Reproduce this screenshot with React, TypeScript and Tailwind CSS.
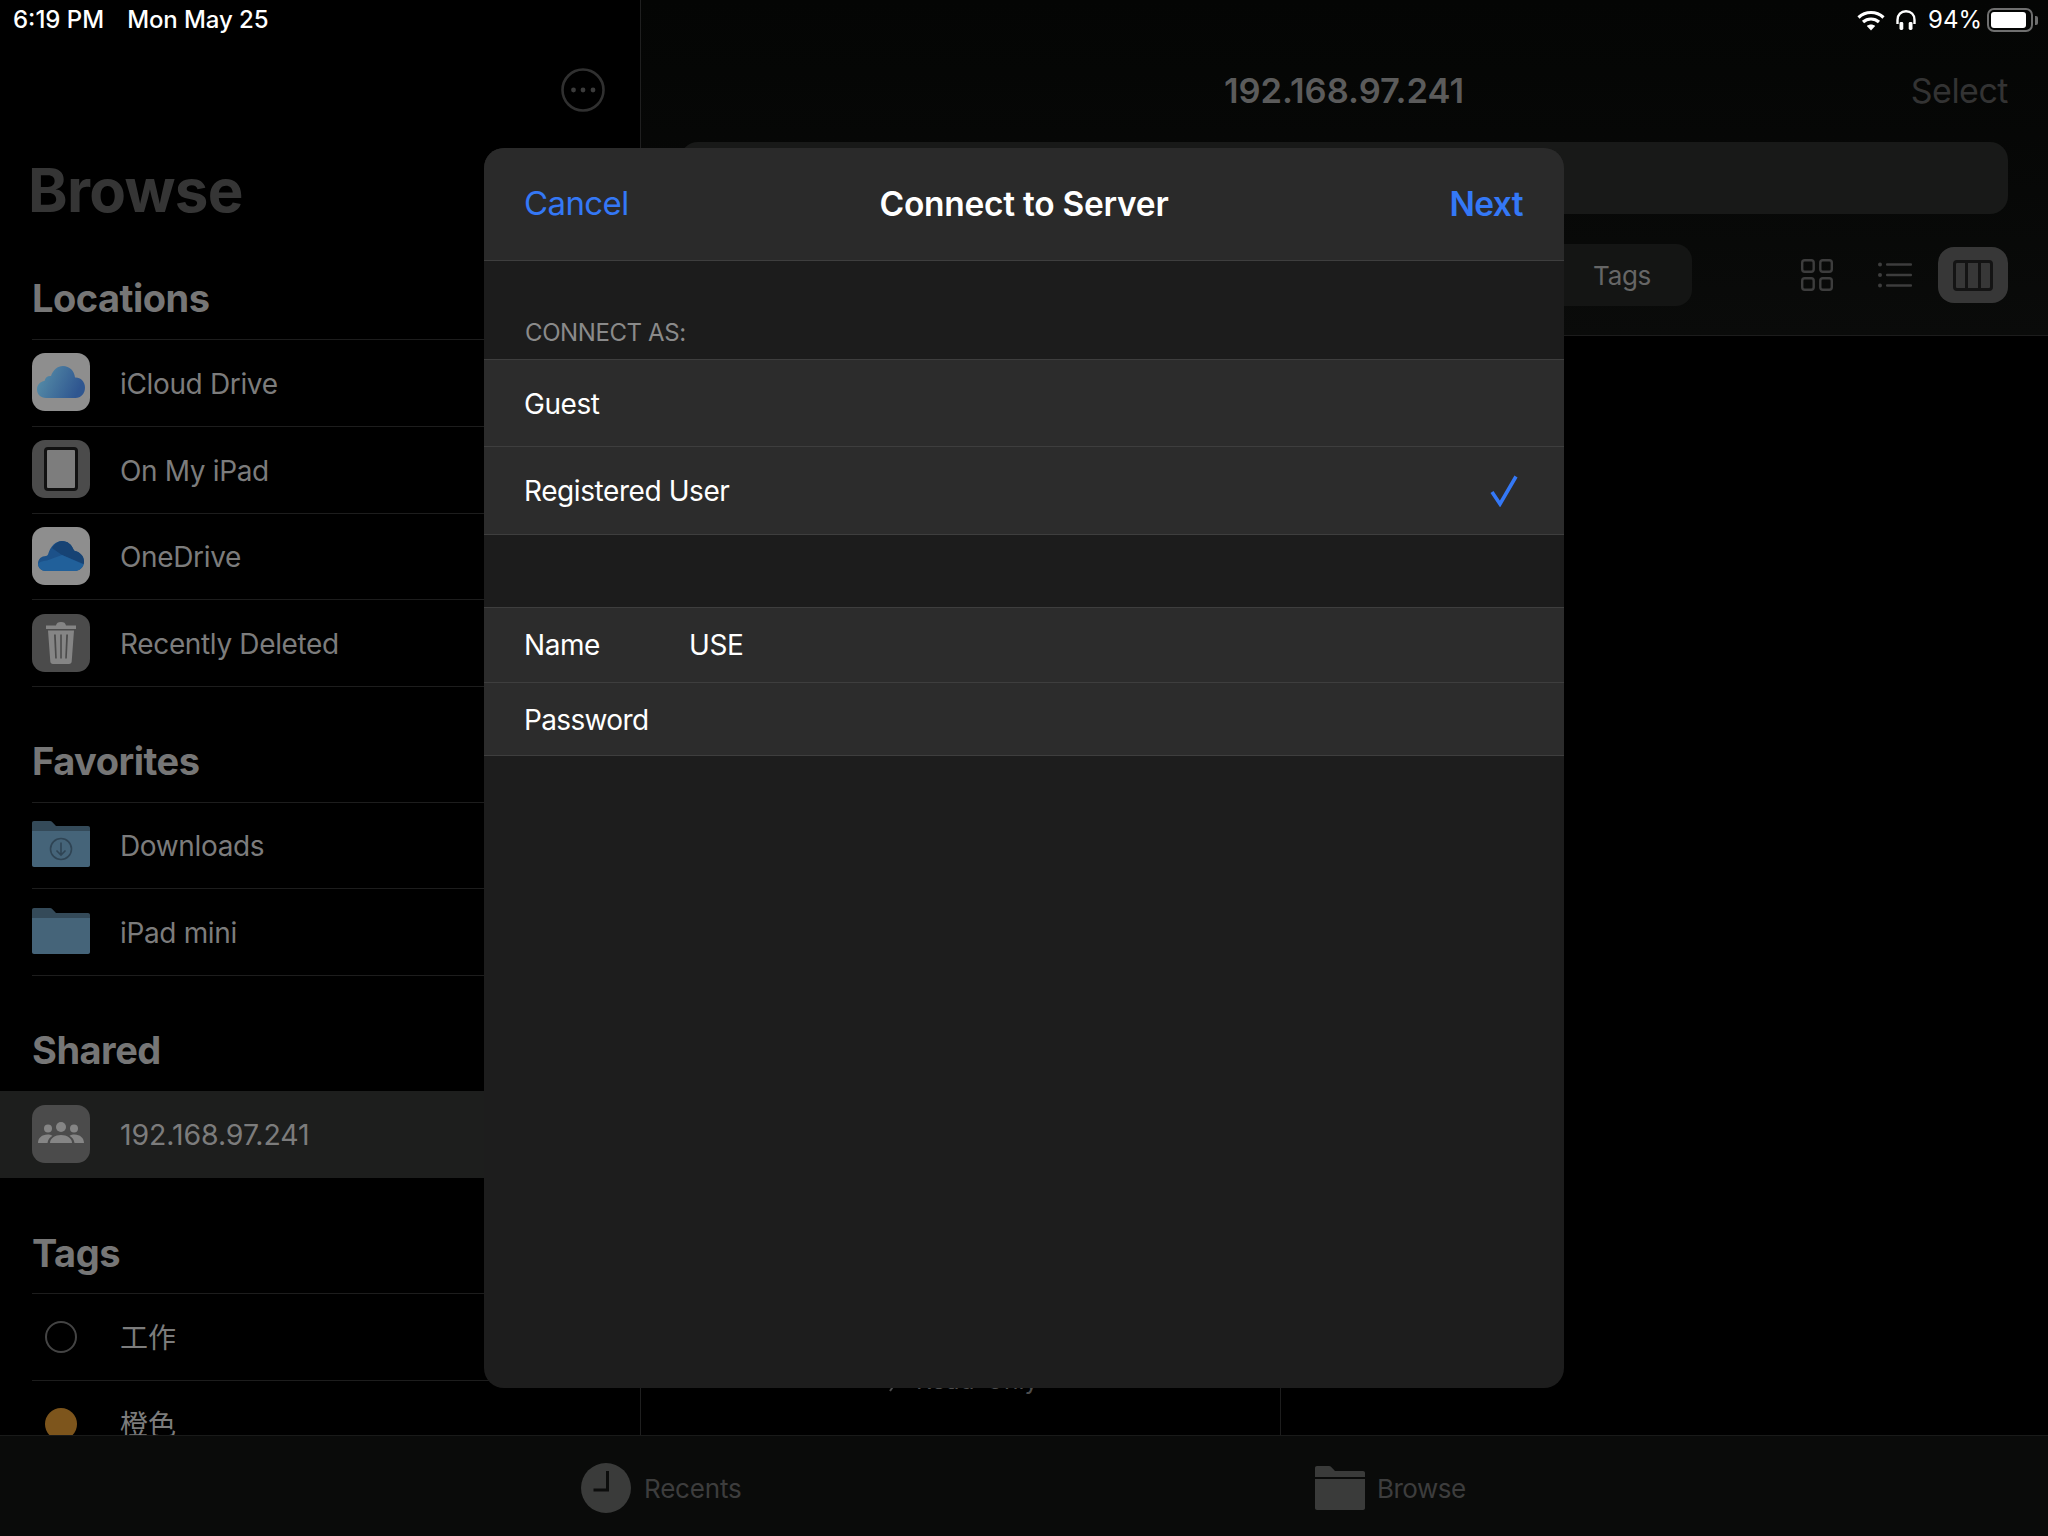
import React from "react";

const Tile = ({ bg, children }: { bg: string; children?: React.ReactNode }) => (
  <div className={`w-[58px] h-[58px] rounded-[13px] flex items-center justify-center shrink-0 ${bg}`}>{children}</div>
);

const ICloud = () => (
  <Tile bg="bg-[#8e8e8e]">
    <svg width="48" height="32" viewBox="0 0 48 32">
      <defs>
        <linearGradient id="ic" x1="0" y1="0" x2="1" y2="0.3">
          <stop offset="0" stopColor="#5a93aa" />
          <stop offset="1" stopColor="#2f5690" />
        </linearGradient>
      </defs>
      <path
        d="M9 32C3.500 32 0 28 0 23.500 0 19 3 15.500 7.500 15c.5-3.500 3.500-5.500 6.500-5C16 4 20.500 0 26 0c6.500 0 11.500 5 12 11.500 5-.5 10 3.500 10 10 0 6-4 10.500-9.500 10.500H9Z"
        fill="url(#ic)"
      />
    </svg>
  </Tile>
);

const IPad = () => (
  <Tile bg="bg-[#4b4b4b]">
    <div className="w-[34px] h-[44px] rounded-[4px] border-[3px] border-[#111] bg-[#7d7d7d]" />
  </Tile>
);

const OneDrive = () => (
  <Tile bg="bg-[#8e8e8e]">
    <svg width="46" height="30" viewBox="0 0 46 30">
      <path
        d="M8 30C3.500 30 0 26.500 0 22.500 0 18 3.500 15 8 15c1-.2 1.500-.6 2-1.500C12.500 5 18 0 24 0c5.500 0 9.500 3.500 11.500 8.500 .3.800.8 1.200 1.500 1.400C42 11 46 15 46 20.500 46 26 42 30 36.500 30H8Z"
        fill="#1c5189"
      />
      <path d="M24 0c5.500 0 9.500 3.500 11.500 8.500 .3.800.8 1.200 1.500 1.400C42 11 46 15 46 20.500 46 21 46 22 45.800 23L24 14 14 7C17 3 20 0 24 0Z" fill="#174374" />
      <path d="M0 23C0 27 3.500 30 8 30h28.500c4 0 7.500-2.500 9.200-6.500L24 14 9 19.500C4 20 1 21 0 23Z" fill="#21609a" />
    </svg>
  </Tile>
);

const Trash = () => (
  <Tile bg="bg-[#4b4b4b]">
    <svg width="30" height="42" viewBox="0 0 30 42" className="mt-[1px]">
      <path d="M0 3.500h10C10.500 1 12 0 15 0s4.500 1 5 3.500h10v3.500H0V3.500Z" fill="#858585" />
      <path fillRule="evenodd" d="M2 8.500h26l-2.300 31c-.1 1.500-1.100 2.500-2.700 2.500H7c-1.600 0-2.600-1-2.700-2.500L2 8.500Zm6 4 1.200 24h1.600l-1-24H8Zm6.200 0v24h1.600v-24h-1.600Zm6 0-1 24h1.600l1.200-24h-1.800Z" fill="#858585" />
    </svg>
  </Tile>
);

const People = () => (
  <Tile bg="bg-[#4b4b4b]">
    <svg width="46" height="24" viewBox="0 0 46 24">
      <g fill="#858585">
        <circle cx="10" cy="6.500" r="4" />
        <circle cx="36" cy="6.500" r="4" />
        <circle cx="23" cy="5" r="5" />
        <path d="M0 21c0-5 4-8.500 9.500-8.500 2 0 3.500.5 5 1.300C11.500 15.500 10 18 9.500 21H0Z" />
        <path d="M46 21c0-5-4-8.500-9.500-8.500-2 0-3.500.5-5 1.300 3 1.700 4.500 4.200 5 7.200H46Z" />
        <path d="M12 21c0-4.500 5-8 11-8s11 3.500 11 8H12Z" />
      </g>
    </svg>
  </Tile>
);

const Folder = ({ download }: { download?: boolean }) => (
  <svg width="58" height="46" viewBox="0 0 58 46" className="shrink-0 mt-[-1px]">
    <path d="M0 2C0 .8.800 0 2 0h16c1 0 1.600.4 2.200 1L24 5h32c1.200 0 2 .8 2 2v4H0V2Z" fill="#344a59" />
    <path d="M0 10h58v34c0 1.200-.8 2-2 2H2c-1.200 0-2-.8-2-2V10Z" fill="#456479" />
    {download && (
      <g fill="none" stroke="#2f4454" strokeWidth="1.600">
        <circle cx="29" cy="28" r="10.500" />
        <path d="M29 21.500v12M24.500 29.500l4.500 4.500 4.500-4.500" />
      </g>
    )}
  </svg>
);

const Row = ({ icon, label }: { icon: React.ReactNode; label: string }) => (
  <div className="h-[86.75px] border-b border-[#1d1d1d] flex items-center">
    <div className="w-[88px] shrink-0 flex items-center pb-[1px]">{icon}</div>
    <span className="pt-[2px] text-[28px] tracking-[-0.35px] text-[#7c7c7c] whitespace-nowrap">{label}</span>
  </div>
);

const Heading = ({ h, pb, label }: { h: string; pb: string; label: string }) => (
  <div className={`${h} ${pb} flex items-end border-b border-[#1d1d1d]`}>
    <span className="text-[38px] leading-[46px] font-bold text-[#767676] tracking-[-0.5px]">{label}</span>
  </div>
);

const Sidebar = () => (
  <aside className="w-[641px] shrink-0 border-r border-[#1f1f1f] overflow-hidden">
    <div className="h-[148px] pt-[68px] pl-[561px]">
      <svg width="44" height="44" viewBox="0 0 44 44">
        <circle cx="22" cy="22" r="20.500" fill="none" stroke="#303030" strokeWidth="2.600" />
        <g fill="#3b3b3b">
          <circle cx="12.500" cy="22" r="2.400" />
          <circle cx="22" cy="22" r="2.400" />
          <circle cx="32" cy="22" r="2.400" />
        </g>
      </svg>
    </div>
    <div className="pl-[28px] pt-[6px] h-[78px] flex items-center">
      <span className="text-[60px] font-bold text-[#353535] tracking-[-0.7px] leading-none">Browse</span>
    </div>
    <div className="pl-[32px]">
      <Heading h="h-[114px]" pb="pb-[18px]" label="Locations" />
      <Row icon={<ICloud />} label="iCloud Drive" />
      <Row icon={<IPad />} label="On My iPad" />
      <Row icon={<OneDrive />} label="OneDrive" />
      <Row icon={<Trash />} label="Recently Deleted" />
      <Heading h="h-[115.500px]" pb="pb-[18px]" label="Favorites" />
      <Row icon={<Folder download />} label="Downloads" />
      <Row icon={<Folder />} label="iPad mini" />
      <div className="h-[115px] pb-[18px] flex items-end">
        <span className="text-[38px] leading-[46px] font-bold text-[#767676] tracking-[-0.5px]">Shared</span>
      </div>
    </div>
    <div className="h-[87px] bg-[#1d1e1d] pl-[32px] flex items-center">
      <div className="w-[88px] shrink-0 pb-[2px]"><People /></div>
      <span className="pt-[2px] text-[28.500px] tracking-[-0.1px] text-[#7c7c7c]">192.168.97.241</span>
    </div>
    <div className="pl-[32px]">
      <Heading h="h-[116px]" pb="pb-[17px]" label="Tags" />
      <div className="h-[86.500px] border-b border-[#1d1d1d] flex items-center">
        <div className="w-[88px] shrink-0 pl-[13px]">
          <div className="w-[32px] h-[32px] rounded-full border-2 border-[#444]" />
        </div>
        <span className="pt-[2px] text-[28px] text-[#7c7c7c]">工作</span>
      </div>
      <div className="h-[86.500px] flex items-center">
        <div className="w-[88px] shrink-0 pl-[13px]">
          <div className="w-[32px] h-[32px] rounded-full bg-[#7d551c]" />
        </div>
        <span className="pt-[3px] text-[28px] text-[#7c7c7c]">橙色</span>
      </div>
    </div>
  </aside>
);

const Main = () => (
  <main className="flex-1 flex flex-col min-w-0">
    <header className="h-[336px] bg-linear-to-b from-[#040504] to-[#0a0b0a] border-b border-[#1c1c1c] pt-[60px] pr-[40px] pl-[39px] shrink-0">
      <div className="h-[60px] relative flex items-center justify-end">
        <span className="absolute left-[0] right-[0] pt-[1px] text-center text-[34.500px] font-semibold text-[#5b5b5b]">192.168.97.241</span>
        <span className="text-[34px] tracking-[-0.5px] text-[#333] relative">Select</span>
      </div>
      <div className="mt-[22px] h-[72px] rounded-[18px] bg-[#181918]" />
      <div className="mt-[30px] h-[62px] flex items-center justify-between">
        <div className="w-[1012px] h-[62px] rounded-[16px] bg-[#141514] flex items-center justify-end pr-[41px]">
          <span className="text-[26px] tracking-[-0.3px] text-[#666]">Tags</span>
        </div>
        <div className="flex items-center">
          <svg width="32" height="32" viewBox="0 0 32 32" fill="none" stroke="#3d3d3d" strokeWidth="2.400">
            <rect x="1.200" y="1.200" width="11.500" height="11.500" rx="2.500" />
            <rect x="19.300" y="1.200" width="11.500" height="11.500" rx="2.500" />
            <rect x="1.200" y="19.300" width="11.500" height="11.500" rx="2.500" />
            <rect x="19.300" y="19.300" width="11.500" height="11.500" rx="2.500" />
          </svg>
          <svg width="34" height="26" viewBox="0 0 34 26" className="ml-[45px]">
            <g fill="#3d3d3d">
              <circle cx="2" cy="2.500" r="2" />
              <circle cx="2" cy="13" r="2" />
              <circle cx="2" cy="23.500" r="2" />
              <rect x="8" y="1.200" width="26" height="2.500" rx="1" />
              <rect x="8" y="11.800" width="26" height="2.500" rx="1" />
              <rect x="8" y="22.300" width="26" height="2.500" rx="1" />
            </g>
          </svg>
          <div className="ml-[26px] w-[70px] h-[56px] rounded-[16px] bg-[#373737] flex items-center justify-center">
            <div className="w-[40px] h-[31px] rounded-[4px] border-[3px] border-[#141414] flex">
              <div className="flex-1 border-r-[3px] border-[#141414]" />
              <div className="flex-1 border-r-[3px] border-[#141414]" />
              <div className="flex-1" />
            </div>
          </div>
        </div>
      </div>
    </header>
    <div className="flex-1 bg-black flex">
      <div className="w-[640px] border-r border-[#1d1d1d] pt-[1028px] pl-[247px]">
        <div className="flex items-center gap-[8px] text-[24.500px] leading-[32px] tracking-[-0.1px] text-[#4d4d4d]">
          <svg width="20" height="24" viewBox="0 0 20 24" fill="none" stroke="#4d4d4d" strokeWidth="2">
            <path d="M2 23 16 3" />
          </svg>
          <span>Read-Only</span>
        </div>
      </div>
    </div>
  </main>
);

const TabBar = () => (
  <footer className="h-[101px] bg-[#0a0b0a] border-t border-[#191a19] flex shrink-0">
    <div className="w-[580px]" />
    <div className="w-[735px] flex items-center pt-[3px]">
      <svg width="50" height="50" viewBox="0 0 50 50" className="ml-[1px]">
        <circle cx="25" cy="25" r="25" fill="#3a3b3a" />
        <path d="M26.500 8v19h-14" fill="none" stroke="#0c0d0c" strokeWidth="3" />
      </svg>
      <span className="ml-[13px] pt-[2px] text-[26px] tracking-[-0.2px] text-[#3d3d3d]">Recents</span>
    </div>
    <div className="flex items-center pt-[3px]">
      <svg width="50" height="44" viewBox="0 0 50 44">
        <path d="M0 2C0 .8.800 0 2 0h12c1 0 1.600.4 2.200 1L20 5h28c1.200 0 2 .8 2 2v4H0V2Z" fill="#3a3b3a" />
        <path d="M0 13h50v29c0 1.200-.8 2-2 2H2c-1.200 0-2-.8-2-2V13Z" fill="#3a3b3a" />
      </svg>
      <span className="ml-[12px] pt-[2px] text-[26px] tracking-[-0.5px] text-[#3d3d3d]">Browse</span>
    </div>
  </footer>
);

const StatusBar = () => (
  <div className="absolute top-0 left-0 right-0 h-[40px] flex items-center justify-between pl-[13px] pr-[10px] text-white text-[24px] font-medium">
    <div className="flex gap-[23px]">
      <span>6:19 PM</span>
      <span className="tracking-[-0.1px]">Mon May 25</span>
    </div>
    <div className="flex items-center">
      <svg width="28" height="21" viewBox="0 0 28 21" fill="none" stroke="#fff" strokeWidth="3.200">
        <path d="M1.500 7.500C8.500 .800 19.500 .800 26.500 7.500" />
        <path d="M6 12c4.500-4 11.500-4 16 0" />
        <path d="M14 20.500 9.800 16c2.500-2 6-2 8.400 0L14 20.500Z" fill="#fff" stroke="none" />
      </svg>
      <svg width="20" height="20" viewBox="0 0 20 20" className="ml-[11px]" fill="none">
        <path d="M1.500 14V10C1.500 4.500 5 1.300 10 1.300s8.500 3.200 8.500 8.700v4" stroke="#fff" strokeWidth="2.400" />
        <rect x="3.500" y="12" width="3.800" height="8" rx="1.400" fill="#fff" />
        <rect x="12.700" y="12" width="3.800" height="8" rx="1.400" fill="#fff" />
      </svg>
      <span className="ml-[12px] font-normal">94%</span>
      <div className="ml-[5px] w-[46px] h-[24px] rounded-[7px] border-2 border-[#6f6f6f] p-[2px]">
        <div className="h-full w-[92%] rounded-[3px] bg-white" />
      </div>
      <div className="ml-[2px] w-[3px] h-[9px] rounded-r-[2px] bg-[#6f6f6f]" />
    </div>
  </div>
);

const Modal = () => (
  <div className="absolute left-[484px] top-[148px] w-[1080px] h-[1240px] rounded-[20px] overflow-hidden bg-[#1d1d1d] flex flex-col text-white">
    <div className="h-[113px] bg-[#2a2a2a] border-b border-[#3e3e3e] flex items-center justify-between px-[40px] relative shrink-0">
      <span className="text-[33px] tracking-[-0.6px] text-[#3478f6]">Cancel</span>
      <span className="absolute left-0 right-0 text-center text-[33.500px] tracking-[-0.28px] font-semibold">Connect to Server</span>
      <span className="text-[33.500px] tracking-[-0.6px] font-semibold text-[#3478f6] pr-[1px]">Next</span>
    </div>
    <div className="h-[99px] px-[41px] flex items-end pb-[10px] bg-[#1c1c1c] border-b border-[#3e3e3e] shrink-0">
      <span className="text-[24px] tracking-[-0.4px] leading-[32px] text-[#8a8a8a]">CONNECT AS:</span>
    </div>
    <div className="h-[87px] bg-[#2c2c2c] border-b border-[#3e3e3e] px-[40px] pt-[1px] flex items-center text-[28px] tracking-[-0.45px] shrink-0">Guest</div>
    <div className="h-[88px] bg-[#2c2c2c] border-b border-[#3e3e3e] pl-[40px] pr-[46px] flex items-center justify-between text-[28px] tracking-[-0.42px] shrink-0">
      <span className="pt-[1px]">Registered User</span>
      <svg width="28" height="32" viewBox="0 0 28 32" fill="none" stroke="#3478f6" strokeWidth="3.600">
        <path d="M2 17 10 29 26 1.500" />
      </svg>
    </div>
    <div className="h-[73px] bg-[#1c1c1c] border-b border-[#3e3e3e] shrink-0" />
    <div className="h-[75px] bg-[#2c2c2c] border-b border-[#3e3e3e] pl-[40px] flex items-center text-[28px] tracking-[-0.45px] shrink-0">
      <span className="w-[165px]">Name</span>
      <span>USE</span>
    </div>
    <div className="h-[73px] bg-[#2c2c2c] border-b border-[#3e3e3e] px-[40px] pt-[1px] flex items-center text-[28px] tracking-[-0.65px] shrink-0">Password</div>
  </div>
);

export default function App() {
  return (
    <div className="relative w-[2048px] h-[1536px] overflow-hidden bg-black font-[Inter,'Noto_Sans_CJK_SC',sans-serif] flex flex-col">
      <div className="flex-1 flex min-h-0">
        <Sidebar />
        <Main />
      </div>
      <TabBar />
      <StatusBar />
      <Modal />
    </div>
  );
}
